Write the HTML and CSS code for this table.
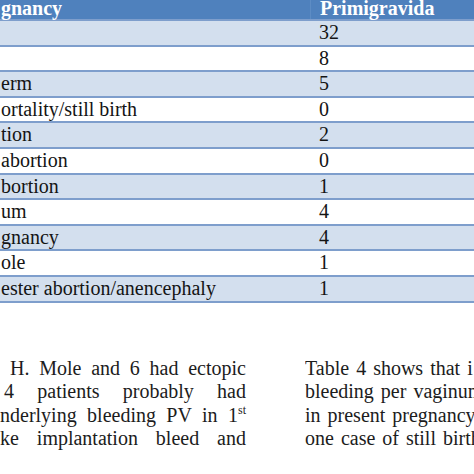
FILE: index.html
```html
<!DOCTYPE html>
<html>
<head>
<meta charset="utf-8">
<link rel="stylesheet" href="styles.css">
</head>
<body>
<div class="page">
  <div class="table">
    <div class="row head">
      <div class="cell label">gnancy</div>
      <div class="cell value">Primigravida</div>
    </div>
    <div class="row shade"><div class="cell label"></div><div class="cell value">32</div></div>
    <div class="row"><div class="cell label"></div><div class="cell value">8</div></div>
    <div class="row shade"><div class="cell label">erm</div><div class="cell value">5</div></div>
    <div class="row"><div class="cell label">ortality/still birth</div><div class="cell value">0</div></div>
    <div class="row shade"><div class="cell label">tion</div><div class="cell value">2</div></div>
    <div class="row"><div class="cell label">abortion</div><div class="cell value">0</div></div>
    <div class="row shade"><div class="cell label">bortion</div><div class="cell value">1</div></div>
    <div class="row"><div class="cell label">um</div><div class="cell value">4</div></div>
    <div class="row shade"><div class="cell label">gnancy</div><div class="cell value">4</div></div>
    <div class="row"><div class="cell label">ole</div><div class="cell value">1</div></div>
    <div class="row shade"><div class="cell label">ester abortion/anencephaly</div><div class="cell value">1</div></div>
  </div>

  <div class="text">
    <div class="col left">
      <div class="line in10">H. Mole and 6 had ectopic</div>
      <div class="line in4">4 patients probably had</div>
      <div class="line">nderlying bleeding PV in 1<sup>st</sup></div>
      <div class="line">ke implantation bleed and</div>
    </div>
    <div class="col right">
      <div class="rline">Table 4 shows that i</div>
      <div class="rline">bleeding per vaginum</div>
      <div class="rline">in present pregnancy</div>
      <div class="rline">one case of still birth</div>
    </div>
  </div>
</div>
</body>
</html>
```

FILE: styles.css
```css
html, body {
  margin: 0;
  padding: 0;
  background: #ffffff;
}

.page {
  width: 474px;
  height: 474px;
  overflow: hidden;
  font-family: "Liberation Serif", "Times New Roman", serif;
  font-size: 20px;
  color: #141414;
}

.table {
  display: flex;
  flex-direction: column;
}

.row {
  display: grid;
  grid-template-columns: 310px 1fr;
  height: 23.6px;
  border-bottom: 2px solid #7e9ecc;
  background: #ffffff;
}

.row.shade {
  background: #d3dfee;
}

.row.head {
  height: 19px;
  background: #4f81bd;
  color: #ffffff;
  font-weight: bold;
}

.cell {
  white-space: nowrap;
  line-height: 23.6px;
}

.head .cell {
  line-height: 16px;
  padding-bottom: 3px;
}

.label {
  padding-left: 1px;
}

.value {
  padding-left: 9px;
}

.head .value {
  padding-left: 9px;
  border-left: 1px solid #5d8cc4;
}

.text {
  display: grid;
  grid-template-columns: 246px 1fr;
  column-gap: 59px;
  margin-top: 54px;
  color: #1c1c1c;
  line-height: 23.5px;
}

.line {
  text-align: justify;
  text-align-last: justify;
}

.line.in10 {
  padding-left: 10px;
}

.line.in4 {
  padding-left: 4px;
}

.line sup {
  font-size: 12px;
  line-height: 0;
  vertical-align: 8px;
}

.col.right {
  overflow: hidden;
}

.rline {
  white-space: nowrap;
  word-spacing: 2px;
}
```
